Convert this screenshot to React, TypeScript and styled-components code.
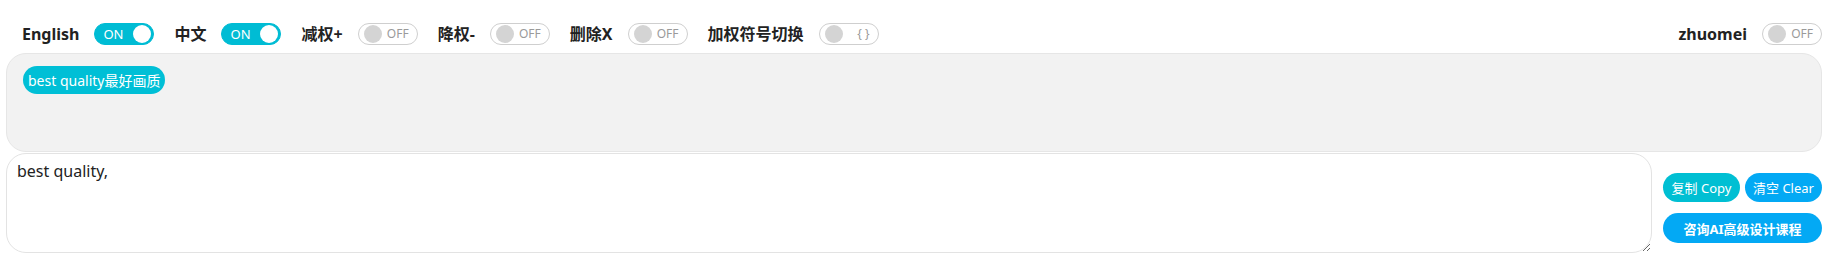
import React, { useState } from 'react';
import styled, { createGlobalStyle } from 'styled-components';

const GlobalStyle = createGlobalStyle`
    html, body {
        margin: 0;
        padding: 0;
        background: #fff;
        font-family: 'Noto Sans', 'Noto Sans CJK SC', sans-serif;
        color: #222;
    }
`;

const Page = styled.div`
    padding: 20px 26px 0 6px;
`;

const Toolbar = styled.div`
    display: flex;
    align-items: center;
    height: 28px;
    padding-left: 16px;
`;

const ToolbarEnd = styled.div`
    display: flex;
    align-items: center;
    margin-left: auto;
`;

const Label = styled.span`
    font-size: 16px;
    font-weight: 700;
    line-height: 22px;
    margin-right: 15px;
    color: #222;
    white-space: nowrap;
`;

const SwitchTrack = styled.button<{ $on: boolean; $last?: boolean }>`
    position: relative;
    box-sizing: border-box;
    width: 60px;
    height: 22px;
    margin: 0 ${({ $last }) => ($last ? '0' : '20px')} 0 0;
    padding: 0;
    border-radius: 11px;
    border: 1px solid ${({ $on }) => ($on ? '#00bcd4' : '#cfcfcf')};
    background: ${({ $on }) => ($on ? '#00bcd4' : '#fff')};
    cursor: pointer;
    font-family: inherit;
`;

const SwitchKnob = styled.span<{ $on: boolean }>`
    position: absolute;
    top: 1px;
    left: ${({ $on }) => ($on ? '38px' : '5px')};
    width: 18px;
    height: 18px;
    border-radius: 50%;
    background: ${({ $on }) => ($on ? '#fff' : '#d4d4d4')};
`;

const SwitchText = styled.span<{ $on: boolean }>`
    position: absolute;
    top: 0;
    line-height: 20px;
    font-size: ${({ $on }) => ($on ? '13px' : '12px')};
    ${({ $on }) => ($on ? 'left: 8px;' : 'right: 8px;')}
    color: ${({ $on }) => ($on ? '#fff' : '#9a9a9a')};
`;

const Panel = styled.div`
    box-sizing: border-box;
    margin-top: 5px;
    height: 99px;
    padding: 12px 16px;
    border: 1px solid #e6e6e6;
    border-radius: 20px;
    background: #f2f2f2;
    display: flex;
    flex-wrap: wrap;
    align-content: flex-start;
    gap: 6px;
`;

const Tag = styled.span`
    display: inline-flex;
    align-items: center;
    height: 28px;
    padding: 0 5px;
    border-radius: 14px;
    background: #00bfd6;
    color: #fff;
    font-size: 14px;
`;

const BottomRow = styled.div`
    display: flex;
    gap: 11px;
    margin-top: 1px;
`;

const Editor = styled.textarea`
    flex: 1;
    box-sizing: border-box;
    height: 100px;
    padding: 6px 10px;
    border: 1px solid #e3e3e3;
    border-radius: 20px;
    font-family: inherit;
    font-size: 16px;
    color: #222;
    outline: none;
`;

const Actions = styled.div`
    width: 159px;
    margin-top: 20px;
    display: flex;
    flex-direction: column;
    gap: 11px;
`;

const ActionRow = styled.div`
    display: flex;
    gap: 5px;
`;

const ActionButton = styled.button<{ $tone: 'teal' | 'blue'; $block?: boolean }>`
    flex: ${({ $block }) => ($block ? 'none' : '1')};
    height: ${({ $block }) => ($block ? '30px' : '29px')};
    padding: 0;
    border: none;
    border-radius: 15px;
    background: ${({ $tone }) => ($tone === 'teal' ? '#00bfd3' : '#03a9f4')};
    color: #fff;
    font-family: inherit;
    font-size: 13px;
    font-weight: ${({ $block }) => ($block ? 700 : 400)};
    cursor: pointer;
    white-space: nowrap;
`;

function Switch({ on, offText = 'OFF', last }: { on: boolean; offText?: string; last?: boolean }) {
    const [value, setValue] = useState(on);
    return (
        <SwitchTrack $on={value} $last={last} onClick={() => setValue(!value)}>
            <SwitchText $on={value}>{value ? 'ON' : offText}</SwitchText>
            <SwitchKnob $on={value} />
        </SwitchTrack>
    );
}

const options = [
    { label: 'English', on: true },
    { label: '中文', on: true },
    { label: '减权+', on: false },
    { label: '降权-', on: false },
    { label: '删除X', on: false },
    { label: '加权符号切换', on: false, offText: '{ }' },
];

export default function App() {
    return (
        <>
            <GlobalStyle />
            <Page>
                <Toolbar>
                    {options.map((o) => (
                        <React.Fragment key={o.label}>
                            <Label>{o.label}</Label>
                            <Switch on={o.on} offText={o.offText} />
                        </React.Fragment>
                    ))}
                    <ToolbarEnd>
                        <Label>zhuomei</Label>
                        <Switch on={false} last />
                    </ToolbarEnd>
                </Toolbar>
                <Panel>
                    <Tag>best quality最好画质</Tag>
                </Panel>
                <BottomRow>
                    <Editor defaultValue="best quality," />
                    <Actions>
                        <ActionRow>
                            <ActionButton $tone="teal">复制 Copy</ActionButton>
                            <ActionButton $tone="blue">清空 Clear</ActionButton>
                        </ActionRow>
                        <ActionButton $tone="blue" $block>
                            咨询AI高级设计课程
                        </ActionButton>
                    </Actions>
                </BottomRow>
            </Page>
        </>
    );
}
